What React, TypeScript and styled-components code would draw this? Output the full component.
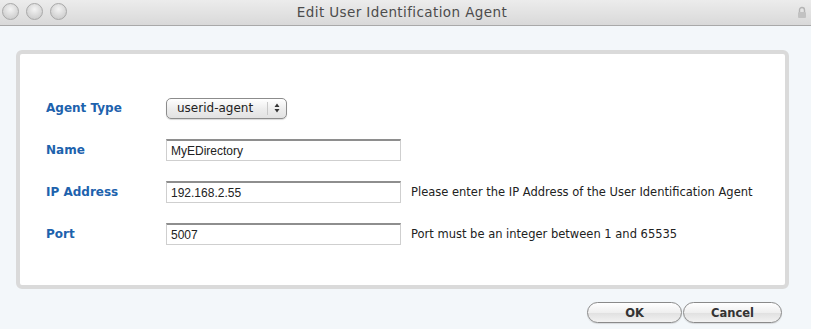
import React from 'react';
import styled, { createGlobalStyle } from 'styled-components';

// STYLES
const GlobalStyle = createGlobalStyle`
  html, body {
    margin: 0;
    padding: 0;
    background: #ffffff;
  }
  body {
    font-family: "DejaVu Sans", "Liberation Sans", sans-serif;
  }
`;

const Window = styled.div`
  width: 811px;
  height: 329px;
  display: flex;
  flex-direction: column;
  background: #f3f7fa;
`;

const TitleBar = styled.div`
  height: 25px;
  flex-shrink: 0;
  display: flex;
  align-items: center;
  padding: 0 4px 0 2px;
  background: linear-gradient(#ececec, #d9d9d9);
  border-bottom: 1px solid #a9a9a9;
  position: relative;
`;

const Lights = styled.div`
  display: flex;
  gap: 7px;
  margin-top: -3px;
`;

const Light = styled.span`
  width: 15px;
  height: 15px;
  border-radius: 50%;
  border: 1px solid #a8a8a8;
  background: radial-gradient(circle at 50% 35%, #f4f4f4 0%, #d6d6d6 60%, #c4c4c4 100%);
`;

const Title = styled.div`
  flex: 1;
  text-align: center;
  font-size: 13.5px;
  letter-spacing: 0.4px;
  color: #4c4c4c;
  margin-right: 70px;
  margin-top: -1px;
`;

const Body = styled.div`
  flex: 1;
  display: flex;
  flex-direction: column;
  padding: 24px 22px 0 16px;
`;

const Panel = styled.div`
  background: #ffffff;
  border: 4px solid #dadada;
  border-radius: 6px;
  padding: 43px 26px 40px 26px;
  display: flex;
  flex-direction: column;
  gap: 20px;
`;

const Row = styled.div`
  display: grid;
  grid-template-columns: 110px 235px auto;
  align-items: center;
  column-gap: 10px;
  height: 22px;
`;

const Label = styled.div`
  font-size: 12px;
  font-weight: bold;
  color: #1d62ad;
`;

const Select = styled.div`
  width: 119px;
  height: 19px;
  box-sizing: content-box;
  border: 1px solid #8c8c8c;
  border-radius: 5px;
  background: linear-gradient(#ffffff, #ececec 55%, #e2e2e2);
  display: flex;
  align-items: center;
  font-size: 12px;
  color: #222;
  box-shadow: 0 1px 1px rgba(0, 0, 0, 0.15);
`;

const SelectText = styled.span`
  flex: 1;
  padding-left: 10px;
`;

const SelectArrows = styled.span`
  width: 18px;
  height: 13px;
  border-left: 1px solid #c8c8c8;
  display: flex;
  align-items: center;
  justify-content: center;
`;

const Input = styled.div`
  width: 235px;
  height: 22px;
  border: 1px solid #cfcfcf;
  border-top: 2px solid #8e8e8e;
  box-sizing: border-box;
  font-family: "Liberation Sans", Arial, sans-serif;
  font-size: 12px;
  color: #222;
  padding-left: 4px;
  display: flex;
  align-items: center;
  background: #fff;
`;

const Help = styled.div`
  font-size: 11.5px;
  color: #222;
  white-space: nowrap;
`;

const Buttons = styled.div`
  display: flex;
  justify-content: flex-end;
  gap: 1px;
  padding: 13px 7px 0 0;
`;

const Button = styled.button<{ $w: number }>`
  width: ${p => p.$w}px;
  height: 21px;
  border: 1px solid #8a8a8a;
  border-radius: 11px;
  background: linear-gradient(#ffffff, #efefef 50%, #e0e0e0 51%, #f2f2f2);
  font-family: "DejaVu Sans", "Liberation Sans", sans-serif;
  font-size: 11.5px;
  font-weight: bold;
  color: #333;
  padding: 0;
  box-shadow: 0 1px 1px rgba(0, 0, 0, 0.12);
`;

const Lock = styled.svg`
  position: absolute;
  right: 4px;
  top: 6px;
`;

// COMPONENT
const rows = [
  { label: 'Name', value: 'MyEDirectory', help: '' },
  { label: 'IP Address', value: '192.168.2.55', help: 'Please enter the IP Address of the User Identification Agent' },
  { label: 'Port', value: '5007', help: 'Port must be an integer between 1 and 65535' },
];

const App: React.FC = () => (
  <>
    <GlobalStyle />
    <Window>
      <TitleBar>
        <Lights>
          <Light />
          <Light />
          <Light />
        </Lights>
        <Title>Edit User Identification Agent</Title>
        <Lock width="10" height="13" viewBox="0 0 10 13">
          <path d="M2.5 6V4a2.5 2.5 0 0 1 5 0v2" fill="none" stroke="#b4b4b4" strokeWidth="1.4" />
          <rect x="1" y="6" width="8" height="6" rx="1" fill="#c2c2c2" />
        </Lock>
      </TitleBar>
      <Body>
        <Panel>
          <Row>
            <Label>Agent Type</Label>
            <Select>
              <SelectText>userid-agent</SelectText>
              <SelectArrows>
                <svg width="6" height="10" viewBox="0 0 6 10">
                  <path d="M3 0.5L5.5 4H0.5z M3 9.5L0.5 6h5z" fill="#333" />
                </svg>
              </SelectArrows>
            </Select>
          </Row>
          {rows.map(r => (
            <Row key={r.label}>
              <Label>{r.label}</Label>
              <Input>{r.value}</Input>
              <Help>{r.help}</Help>
            </Row>
          ))}
        </Panel>
        <Buttons>
          <Button $w={95}>OK</Button>
          <Button $w={99}>Cancel</Button>
        </Buttons>
      </Body>
    </Window>
  </>
);

export default App;
